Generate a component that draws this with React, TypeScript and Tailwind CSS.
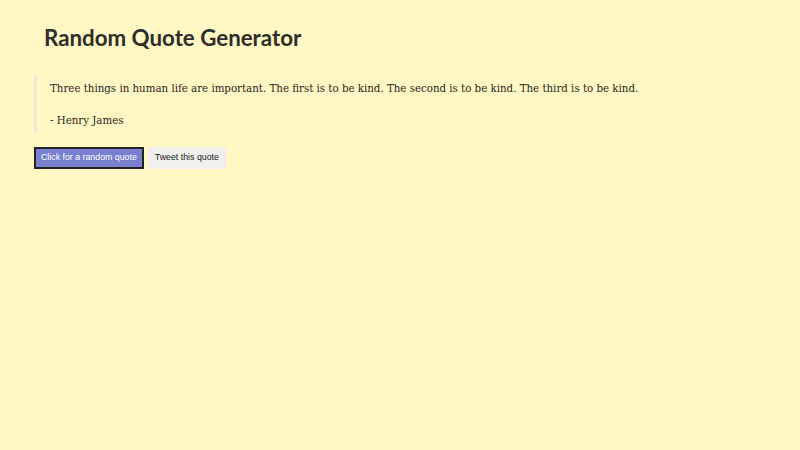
import React, { useState } from "react";

const quotes = [
  {
    text: "Three things in human life are important. The first is to be kind. The second is to be kind. The third is to be kind.",
    author: "Henry James",
  },
];

export default function App() {
  const [index, setIndex] = useState(0); // current quote
  const quote = quotes[index];

  const nextQuote = () => {
    setIndex((i) => (i + 1) % quotes.length);
  };

  return (
    <div className="min-h-[450px] w-full bg-[#fff7c4] text-[#333]">
      <div className="pl-[34px] pt-[23px]">
        <h1 className="ml-[10px] text-[22.3px] leading-[30px] font-bold text-[#2e2e2a] [font-family:Lato,sans-serif]">
          Random Quote Generator
        </h1>

        {/* Quote block */}
        <blockquote className="mt-[22px] border-l-[3px] border-[#ebe8d6] pl-[13px] py-[5px] [font-family:'DejaVu_Serif_Condensed','DejaVu_Serif',serif] text-[11.4px] text-[#26261f]">
          <p className="leading-[16px]">{quote.text}</p>
          <p className="mt-[16px] leading-[16px]">- {quote.author}</p>
        </blockquote>

        <div className="mt-[14px] flex items-center gap-[4px] [font-family:'Liberation_Sans',Arial,sans-serif] text-[8.8px]">
          <button
            onClick={nextQuote}
            className="h-[22px] px-[5px] bg-[#7880cf] text-white border-2 border-[#222]"
          >
            Click for a random quote
          </button>
          <button className="h-[22px] px-[7px] bg-[#f0efec] text-[#222]">
            Tweet this quote
          </button>
        </div>
      </div>
    </div>
  );
}
